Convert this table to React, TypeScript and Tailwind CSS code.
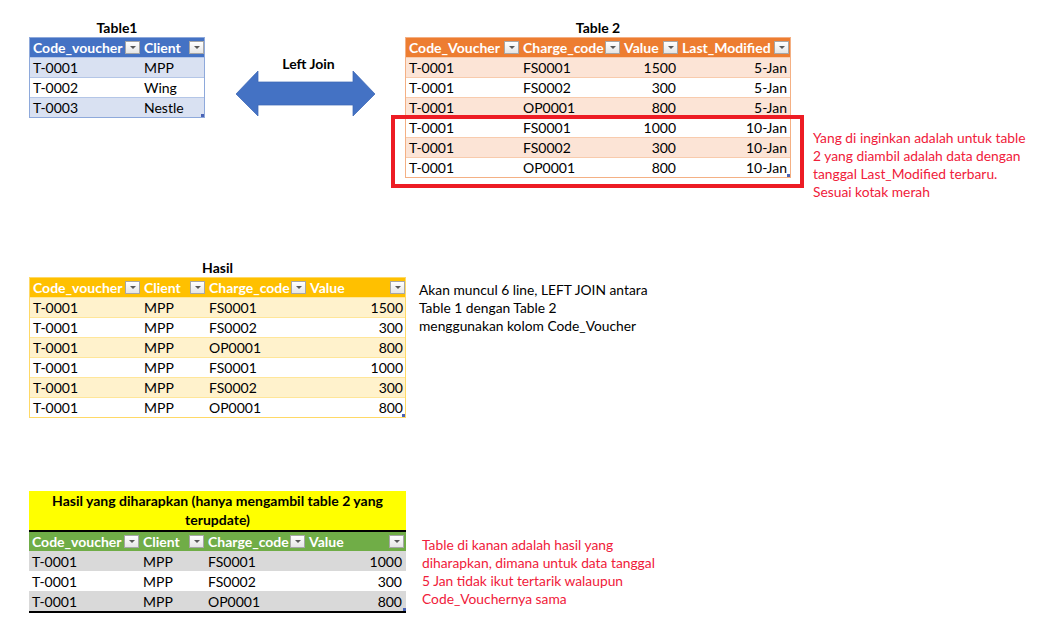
import type { ReactNode } from 'react';

type Col = { label: string; width: number; align?: 'left' | 'right' };

type TableTheme = {
  header: string;
  band: string;
  line: string;
  outer: string;
};

const FONT = { fontFamily: 'Lato, "Open Sans", sans-serif' };

function FilterButton() {
  return (
    <span className="absolute right-[1px] top-[3px] flex h-[13px] w-[15px] items-center justify-center border border-[#a6a6a6] bg-gradient-to-b from-white to-[#e6e6e6]">
      <span className="h-0 w-0 border-x-[3px] border-t-[3px] border-x-transparent border-t-[#595959]" />
    </span>
  );
}

function SheetTable({ cols, rows, theme, sides = true }: { cols: Col[]; rows: string[][]; theme: TableTheme; sides?: boolean }) {
  return (
    <div className={`relative ${sides ? `border ${theme.outer}` : ''}`}>
      <div className={`flex h-[19px] ${theme.header}`}>
        {cols.map(c => (
          <div key={c.label} className="relative shrink-0 pl-[3px] text-[14px] font-bold leading-[20px] text-white" style={{ width: c.width }}>
            {c.label}
            <FilterButton />
          </div>
        ))}
      </div>
      {rows.map((r, i) => (
        <div key={i} className={`flex h-[20px] border-t ${theme.line} ${i % 2 === 0 ? theme.band : 'bg-white'}`}>
          {r.map((v, j) => (
            <div
              key={j}
              className={`shrink-0 text-[14px] leading-[20px] text-black ${cols[j].align === 'right' ? 'pr-[3px] text-right' : 'pl-[3px]'}`}
              style={{ width: cols[j].width }}>
              {v}
            </div>
          ))}
        </div>
      ))}
      {/* resize handle */}
      <span className="absolute bottom-0 right-0 h-[3px] w-[3px] bg-[#4a63b5]" />
    </div>
  );
}

function Title({ children }: { children: ReactNode }) {
  return <div className="h-[18px] text-center text-[14px] font-bold leading-[18px] text-black">{children}</div>;
}

function Note({ children, red = false }: { children: ReactNode; red?: boolean }) {
  return (
    <div className={`text-[13.8px] leading-[18px] ${red ? 'text-[#f0203a]' : 'text-black'}`}>{children}</div>
  );
}

const table1Cols: Col[] = [
  { label: 'Code_voucher', width: 111 },
  { label: 'Client', width: 64 },
];

const table2Cols: Col[] = [
  { label: 'Code_Voucher', width: 114 },
  { label: 'Charge_code', width: 101 },
  { label: 'Value', width: 58, align: 'right' },
  { label: 'Last_Modified', width: 111, align: 'right' },
];

const hasilCols: Col[] = [
  { label: 'Code_voucher', width: 111 },
  { label: 'Client', width: 65 },
  { label: 'Charge_code', width: 101 },
  { label: 'Value', width: 99, align: 'right' },
];

function App() {
  return (
    <div className="h-[623px] w-[1038px] overflow-hidden bg-white" style={FONT}>
      {/* top band */}
      <div className="flex h-[200px] items-start">
        <div className="ml-[29px] mt-[19px] w-[176px]">
          <Title>Table1</Title>
          <SheetTable
            cols={table1Cols}
            theme={{ header: 'bg-[#4472c4]', band: 'bg-[#d9e1f2]', line: 'border-[#b4c6e7]', outer: 'border-[#8ea9db]' }}
            rows={[
              ['T-0001', 'MPP'],
              ['T-0002', 'Wing'],
              ['T-0003', 'Nestle'],
            ]} />
        </div>

        <div className="ml-[31px] mt-[56px] flex w-[140px] flex-col items-center">
          <div className="h-[16px] pl-[5px] text-[14px] font-bold leading-[16px] text-black">Left Join</div>
          <svg width="140" height="46" viewBox="0 0 140 46" className="-mt-[1px]">
            <polygon
              points="0,23 22,0 22,11 117,11 117,0 139,23 117,45 117,34 22,34 22,45"
              fill="#4472c4"
              stroke="#3d68b5"
              strokeWidth="0.75" />
          </svg>
        </div>

        <div className="relative ml-[29px] mt-[19px] w-[386px]">
          <Title>Table 2</Title>
          <SheetTable
            cols={table2Cols}
            theme={{ header: 'bg-[#ed7d31]', band: 'bg-[#fce4d6]', line: 'border-[#f8cbad]', outer: 'border-[#f4b084]' }}
            rows={[
              ['T-0001', 'FS0001', '1500', '5-Jan'],
              ['T-0001', 'FS0002', '300', '5-Jan'],
              ['T-0001', 'OP0001', '800', '5-Jan'],
              ['T-0001', 'FS0001', '1000', '10-Jan'],
              ['T-0001', 'FS0002', '300', '10-Jan'],
              ['T-0001', 'OP0001', '800', '10-Jan'],
            ]} />
          {/* red highlight box */}
          <div className="absolute left-[-14px] top-[96px] h-[73px] w-[413px] border-4 border-[#ed1c24]" />
        </div>

        <div className="ml-[22px] mt-[129px]">
          <Note red>
            Yang di inginkan adalah untuk table
            <br />2 yang diambil adalah data dengan
            <br />tanggal Last_Modified terbaru.
            <br />Sesuai kotak merah
          </Note>
        </div>
      </div>

      {/* middle band */}
      <div className="flex items-start pt-[59px]">
        <div className="ml-[29px] w-[377px]">
          <Title>Hasil</Title>
          <SheetTable
            cols={hasilCols}
            theme={{ header: 'bg-[#ffc000]', band: 'bg-[#fff2cc]', line: 'border-[#ffe699]', outer: 'border-[#ffd966]' }}
            rows={[
              ['T-0001', 'MPP', 'FS0001', '1500'],
              ['T-0001', 'MPP', 'FS0002', '300'],
              ['T-0001', 'MPP', 'OP0001', '800'],
              ['T-0001', 'MPP', 'FS0001', '1000'],
              ['T-0001', 'MPP', 'FS0002', '300'],
              ['T-0001', 'MPP', 'OP0001', '800'],
            ]} />
        </div>
        <div className="ml-[13px] mt-[22px]">
          <Note>
            Akan muncul 6 line, LEFT JOIN antara
            <br />Table 1 dengan Table 2
            <br />menggunakan kolom Code_Voucher
          </Note>
        </div>
      </div>

      {/* bottom band */}
      <div className="mt-[73px] flex items-start">
        <div className="ml-[29px] w-[377px]">
          <div className="h-[39px] bg-[#ffff00] text-center text-[14px] font-bold leading-[19px] text-black">
            Hasil yang diharapkan (hanya mengambil table 2 yang
            <br />terupdate)
          </div>
          <div className="border-y-2 border-black">
            <SheetTable
              cols={hasilCols}
              sides={false}
              theme={{ header: 'bg-[#70ad47]', band: 'bg-[#d9d9d9]', line: 'border-transparent', outer: '' }}
              rows={[
                ['T-0001', 'MPP', 'FS0001', '1000'],
                ['T-0001', 'MPP', 'FS0002', '300'],
                ['T-0001', 'MPP', 'OP0001', '800'],
              ]} />
          </div>
        </div>
        <div className="ml-[16px] mt-[45px]">
          <Note red>
            Table di kanan adalah hasil yang
            <br />diharapkan, dimana untuk data tanggal
            <br />5 Jan tidak ikut tertarik walaupun
            <br />Code_Vouchernya sama
          </Note>
        </div>
      </div>
    </div>
  );
}

export default App;
